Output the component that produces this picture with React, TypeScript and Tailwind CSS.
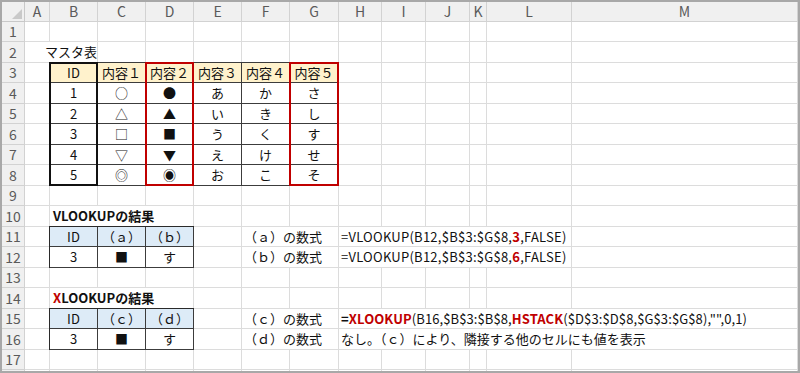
import React from 'react';

const COLS = ['A', 'B', 'C', 'D', 'E', 'F', 'G', 'H', 'I', 'J', 'K', 'L', 'M'];

const SPAN: Record<number, string> = {
  1: '',
  2: 'col-span-2',
  3: 'col-span-3',
  5: 'col-span-5',
  6: 'col-span-6',
};

const TEMPLATE =
  'grid grid-cols-[23px_25px_48px_48px_48px_48px_48px_49px_43px_44px_44px_17px_85px_1fr] grid-rows-[20px_20px_21px_20px_21px_20px_21px_20px_21px_20px_21px_20px_21px_20px_21px_20px_21px_20px_1fr]';

const CELL =
  'border-r border-b border-[#dcdcdc] flex items-center whitespace-nowrap min-w-0 text-[13px] text-[#111] pl-[2px]';

const R = ({ children }: { children: React.ReactNode }) => (
  <span className="text-[#c00000] font-bold">{children}</span>
);

type Over = Record<number, { span: number; node: React.ReactNode; cls?: string }>;

const ROWS: Record<number, Over> = {
  2: { 0: { span: 2, node: 'マスタ表', cls: 'pl-[20px]' } },
  10: { 1: { span: 3, node: 'VLOOKUPの結果', cls: 'font-bold pl-[3px]' } },
  11: {
    5: { span: 2, node: '（ａ）の数式' },
    7: {
      span: 5,
      cls: 'tracking-[0.25px]',
      node: (
        <>
          =VLOOKUP(B12,$B$3:$G$8,<R>3</R>,FALSE)
        </>
      ),
    },
  },
  12: {
    5: { span: 2, node: '（ｂ）の数式' },
    7: {
      span: 5,
      cls: 'tracking-[0.25px]',
      node: (
        <>
          =VLOOKUP(B12,$B$3:$G$8,<R>6</R>,FALSE)
        </>
      ),
    },
  },
  14: {
    1: {
      span: 3,
      node: (
        <>
          <span className="text-[#c00000]">X</span>LOOKUPの結果
        </>
      ),
      cls: 'font-bold pl-[3px]',
    },
  },
  15: {
    5: { span: 2, node: '（ｃ）の数式' },
    7: {
      span: 6,
      cls: 'tracking-[0.1px]',
      node: (
        <>
          <span className="font-bold">=</span>
          <R>XLOOKUP</R>(B16,$B$3:$B$8,<R>HSTACK</R>($D$3:$D$8,$G$3:$G$8),"",0,1)
        </>
      ),
    },
  },
  16: {
    5: { span: 2, node: '（ｄ）の数式' },
    7: { span: 6, node: 'なし。（ｃ）により、隣接する他のセルにも値を表示' },
  },
};

function rowCells(r: number) {
  const over = ROWS[r] || {};
  const out: React.ReactNode[] = [];
  let c = 0;
  while (c < 13) {
    const o = over[c];
    if (o) {
      out.push(
        <div key={c} className={`${CELL} ${SPAN[o.span]} ${o.cls ?? ''}`}>
          {o.node}
        </div>
      );
      c += o.span;
    } else {
      out.push(<div key={c} className={CELL} />);
      c += 1;
    }
  }
  return out;
}

const MT_CELL =
  'border-r border-b border-[#3c3c3c] flex items-center justify-center text-[13px] text-[#111] whitespace-nowrap';

const MASTER = [
  ['ID', '内容１', '内容２', '内容３', '内容４', '内容５'],
  ['1', '○', '●', 'あ', 'か', 'さ'],
  ['2', '△', '▲', 'い', 'き', 'し'],
  ['3', '□', '■', 'う', 'く', 'す'],
  ['4', '▽', '▼', 'え', 'け', 'せ'],
  ['5', '◎', '◉', 'お', 'こ', 'そ'],
];

function SmallTable({ h, area }: { h: string[]; area: string }) {
  const v = ['3', '■', 'す'];
  return (
    <div
      className={`${area} -ml-px -mt-px border-l border-t border-[#2a2a2a] grid grid-cols-[48px_48px_48px] grid-rows-[20px_21px]`}
    >
      {h.map((t, i) => (
        <div key={'h' + i} className={`${MT_CELL} border-[#2a2a2a] bg-[#ddebf7]`}>
          {t}
        </div>
      ))}
      {v.map((t, i) => (
        <div key={'v' + i} className={`${MT_CELL} border-[#2a2a2a]`}>
          {t}
        </div>
      ))}
    </div>
  );
}

export default function App() {
  return (
    <div className="w-[800px] h-[373px] border-2 border-[#a8a8a8] bg-white overflow-hidden [font-family:'Noto_Sans_CJK_JP','Noto_Sans',sans-serif]">
      <div className="grid w-full h-full">
        {/* base sheet */}
        <div className={`${TEMPLATE} col-start-1 row-start-1`}>
          <div className="bg-[#f0f0f0] border-r border-b border-[#c8c8c8] flex items-end justify-end p-[2px]">
            <svg width="10" height="10" viewBox="0 0 10 10">
              <polygon points="10,0 10,10 0,10" fill="#c9c9c9" />
            </svg>
          </div>
          {COLS.map((c) => (
            <div
              key={c}
              className="bg-[#f0f0f0] border-r border-b border-[#d2d2d2] flex items-center justify-center text-[14px] text-[#5a5a5a]"
            >
              {c}
            </div>
          ))}
          {Array.from({ length: 17 }, (_, i) => i + 1).map((r) => (
            <React.Fragment key={r}>
              <div className="bg-[#f0f0f0] border-r border-b border-[#d2d2d2] flex items-center justify-center text-[14px] text-[#5a5a5a]">
                {r}
              </div>
              {rowCells(r)}
            </React.Fragment>
          ))}
          <div className="bg-[#f0f0f0] border-r border-[#d2d2d2]" />
          {COLS.map((c) => (
            <div key={'f' + c} className="border-r border-[#dcdcdc]" />
          ))}
        </div>

        {/* overlay: tables and highlight boxes */}
        <div className={`${TEMPLATE} col-start-1 row-start-1`}>
          <div className="col-start-3 col-end-9 row-start-4 row-end-10 -ml-px -mt-px border-l border-t border-[#3c3c3c] grid grid-cols-[48px_48px_48px_48px_48px_49px] grid-rows-[20px_21px_20px_21px_20px_21px]">
            {MASTER.map((row, ri) =>
              row.map((t, ci) => (
                <div key={ri + '-' + ci} className={`${MT_CELL} ${ri === 0 ? 'bg-[#fff2cc]' : ''}`}>
                  {t}
                </div>
              ))
            )}
          </div>
          <div className="col-start-3 col-end-4 row-start-4 row-end-10 -ml-px -mt-px border-2 border-[#111]" />
          <div className="col-start-5 col-end-6 row-start-4 row-end-10 -ml-px -mt-px border-2 border-[#c00000]" />
          <div className="col-start-8 col-end-9 row-start-4 row-end-10 -ml-px -mt-px border-2 border-[#c00000]" />

          <SmallTable h={['ID', '（ａ）', '（ｂ）']} area="col-start-3 col-end-6 row-start-12 row-end-14" />
          <SmallTable h={['ID', '（ｃ）', '（ｄ）']} area="col-start-3 col-end-6 row-start-16 row-end-18" />
        </div>
      </div>
    </div>
  );
}
